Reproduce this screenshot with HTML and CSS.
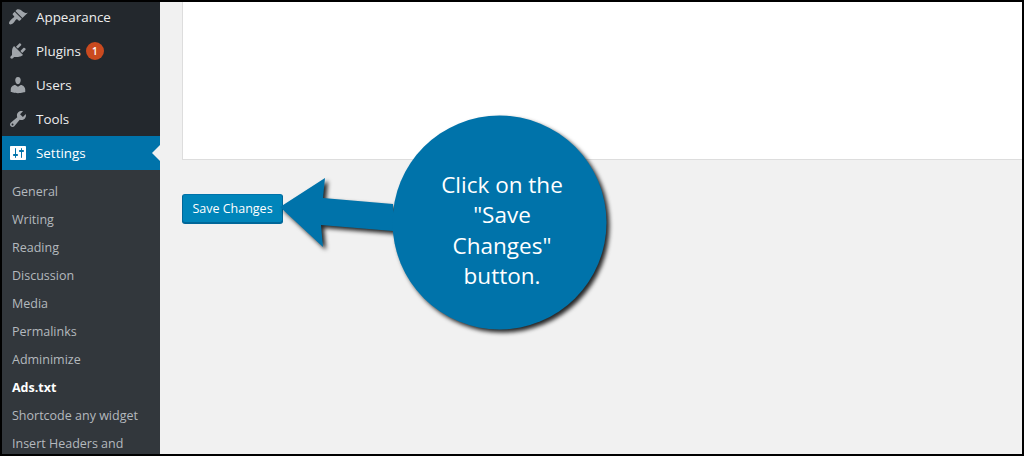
FILE: index.html
```html
<!DOCTYPE html>
<html lang="en">
<head>
  <meta charset="UTF-8">
  <title>Save Changes</title>
  <link rel="stylesheet" href="styles.css">
</head>
<body>
  <div class="frame">
    <nav class="sidebar">
      <ul class="menu">
        <li class="menu-item">
          <svg class="menu-icon" viewBox="0 0 20 20"><path d="M14.48 11.06L7.41 3.99l1.5-1.5c.5-.56 2.3-.47 3.51.32 1.21.8 1.43 1.28 2.91 2.1 1.18.64 2.45 1.26 4.45.85zm-.71.71L6.7 4.7 4.93 6.47c-.39.39-.39 1.02 0 1.41l1.06 1.06c.39.39.39 1.03 0 1.42-.6.6-1.43 1.11-2.21 1.69-.35.26-.7.53-1.01.84C1.43 14.23.4 16.08 1.4 17.07c.99 1 2.84-.03 4.18-1.36.31-.31.58-.66.85-1.02.57-.78 1.08-1.61 1.69-2.21.39-.39 1.02-.39 1.41 0l1.06 1.06c.39.39 1.02.39 1.41 0z"/></svg>
          <span class="menu-label">Appearance</span>
        </li>
        <li class="menu-item">
          <svg class="menu-icon" viewBox="0 0 20 20"><path d="M13.11 4.36L9.87 7.6 8 5.73l3.24-3.24c.35-.34 1.05-.2 1.56.32.52.51.66 1.21.31 1.55zm-8 1.77l.91-1.12 9.01 9.01-1.19.84c-.71.71-2.63 1.16-3.82 1.16H6.14L4.9 17.26c-.59.59-1.54.59-2.12 0-.59-.58-.59-1.53 0-2.12l1.24-1.24v-3.88c0-1.13.4-3.19 1.09-3.89zm7.26 3.97l3.24-3.24c.34-.35 1.04-.21 1.55.31.52.51.66 1.21.31 1.55l-3.24 3.25z"/></svg>
          <span class="menu-label">Plugins</span>
          <span class="badge">1</span>
        </li>
        <li class="menu-item">
          <svg class="menu-icon" viewBox="0 0 20 20"><path d="M10 9.25c-2.27 0-2.73-3.44-2.73-3.44C7 4.02 7.82 2 9.97 2c2.16 0 2.98 2.02 2.71 3.81 0 0-.41 3.44-2.68 3.44zm0 2.57L12.72 10c2.39 0 4.52 2.33 4.52 4.53v2.49s-3.65 1.13-7.24 1.13c-3.65 0-7.24-1.13-7.24-1.13v-2.49c0-2.25 1.94-4.48 4.47-4.48z"/></svg>
          <span class="menu-label">Users</span>
        </li>
        <li class="menu-item">
          <svg class="menu-icon" viewBox="0 0 20 20"><path d="M16.68 9.77c-1.34 1.34-3.3 1.67-4.95.99l-5.41 6.52c-.99.99-2.59.99-3.58 0s-.99-2.59 0-3.57l6.52-5.42c-.68-1.65-.35-3.61.99-4.95 1.28-1.28 3.12-1.62 4.72-1.06l-2.89 2.89 2.82 2.82 2.86-2.87c.53 1.58.18 3.39-1.08 4.65zM3.81 16.21c.4.39 1.04.39 1.43 0 .4-.4.4-1.04 0-1.43-.39-.4-1.03-.4-1.43 0-.39.39-.39 1.03 0 1.43z"/></svg>
          <span class="menu-label">Tools</span>
        </li>
        <li class="menu-item current">
          <svg class="menu-icon" viewBox="0 0 20 20"><path d="M18 16V4c0-.55-.45-1-1-1H3c-.55 0-1 .45-1 1v12c0 .55.45 1 1 1h14c.55 0 1-.45 1-1zM8 11h1c.55 0 1 .45 1 1s-.45 1-1 1H8v1.5c0 .28-.22.5-.5.5s-.5-.22-.5-.5V13H6c-.55 0-1-.45-1-1s.45-1 1-1h1V5.5c0-.28.22-.5.5-.5s.5.22.5.5V11zm5-2h-1c-.55 0-1-.45-1-1s.45-1 1-1h1V5.5c0-.28.22-.5.5-.5s.5.22.5.5V7h1c.55 0 1 .45 1 1s-.45 1-1 1h-1v5.5c0 .28-.22.5-.5.5s-.5-.22-.5-.5V9z"/></svg>
          <span class="menu-label">Settings</span>
        </li>
      </ul>
      <ul class="submenu">
        <li>General</li>
        <li>Writing</li>
        <li>Reading</li>
        <li>Discussion</li>
        <li>Media</li>
        <li>Permalinks</li>
        <li>Adminimize</li>
        <li class="active">Ads.txt</li>
        <li>Shortcode any widget</li>
        <li>Insert Headers and</li>
      </ul>
    </nav>
    <main class="content">
      <div class="panel"></div>
      <button class="save-btn">Save Changes</button>
    </main>
    <div class="callout">
      <svg class="callout-shape" width="345" height="240" viewBox="0 0 345 240">
        <path d="M5 102L50 73 48 93 118 99 118 126 46 120 48 142z"/>
        <circle cx="224.5" cy="117.5" r="107"/>
      </svg>
      <p class="callout-text">Click on the<br>"Save<br>Changes"<br>button.</p>
    </div>
  </div>
</body>
</html>
```

FILE: styles.css
```css
* { margin:0; padding:0; box-sizing:border-box; }
body {
  font-family: "Open Sans", sans-serif;
  background: #000;
  overflow: hidden;
}
ul { list-style: none; }
.frame {
  position: relative;
  display: flex;
  width: 1024px;
  height: 456px;
  border: 2px solid #000;
  background: #f1f1f1;
  overflow: hidden;
}
.sidebar {
  flex: none;
  width: 158px;
  background: #32373c;
}
.menu {
  margin-top: -2px;
  background: #23282d;
}
.menu-item {
  position: relative;
  display: flex;
  align-items: center;
  height: 34px;
  padding-left: 6px;
  font-size: 13.4px;
  color: #eee;
}
.menu-icon {
  width: 20px;
  height: 20px;
  margin-right: 8px;
  fill: #a0a5aa;
}
.menu-item.current {
  background: #0073aa;
  color: #fff;
}
.menu-item.current .menu-icon { fill: #fff; }
.menu-item.current::after {
  content: "";
  position: absolute;
  right: 0;
  top: 9px;
  border: 8px solid transparent;
  border-right-color: #f1f1f1;
}
.badge {
  width: 18px;
  height: 18px;
  margin-left: 5px;
  border-radius: 50%;
  background: #ca4a1f;
  color: #fff;
  font-size: 10px;
  font-weight: 600;
  line-height: 18px;
  text-align: center;
}
.submenu {
  padding: 8px 0 6px;
}
.submenu li {
  height: 28px;
  padding-left: 10px;
  font-size: 12.5px;
  line-height: 28px;
  color: #b4b9be;
  white-space: nowrap;
}
.submenu .active {
  color: #fff;
  font-weight: 700;
}
.content {
  flex: 1;
  padding-left: 22px;
}
.panel {
  height: 158px;
  margin-right: -2px;
  background: #fff;
  border: 1px solid #ddd;
  border-top: none;
  border-right: none;
}
.save-btn {
  display: block;
  width: 101px;
  height: 29px;
  margin-top: 34px;
  background: #0085ba;
  border: 1px solid #006799;
  border-top-color: #0073aa;
  border-radius: 3px;
  box-shadow: 0 1px 0 #006799;
  font-family: inherit;
  font-size: 12.5px;
  color: #fff;
}
.callout {
  position: absolute;
  left: 273px;
  top: 103px;
  width: 345px;
  height: 240px;
}
.callout-shape {
  display: block;
  fill: #0073aa;
  filter: drop-shadow(3px 3px 2px rgba(0,0,0,.85));
}
.callout-text {
  position: absolute;
  left: 119px;
  top: 65px;
  width: 216px;
  font-size: 22.5px;
  line-height: 30.3px;
  text-align: center;
  color: #fff;
}
```
